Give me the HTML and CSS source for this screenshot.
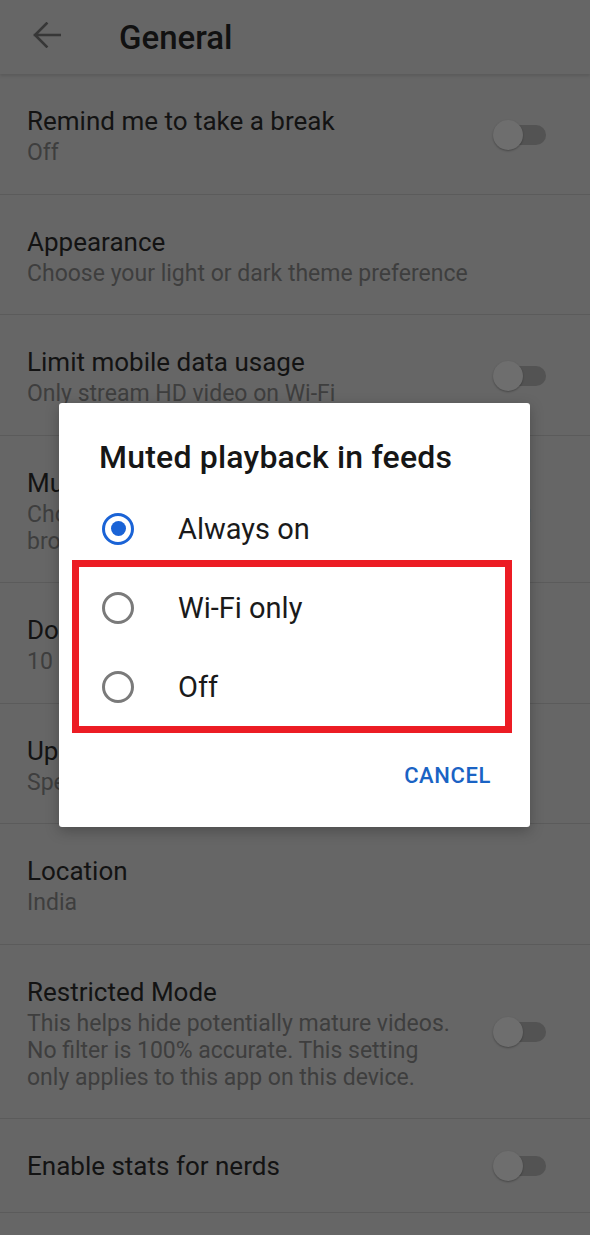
FILE: index.html
```html
<!DOCTYPE html>
<html lang="en">
<head>
<meta charset="utf-8">
<title>General</title>
<link rel="stylesheet" href="styles.css">
</head>
<body>
<div class="screen">
  <header class="header">
    <svg class="back" viewBox="0 0 28 26" width="28" height="26"><path d="M2 13H27.5M13.5 1.5L2 13L13.5 24.5" fill="none" stroke="#373737" stroke-width="2.6" stroke-linecap="square"/></svg>
    <h1 class="title">General</h1>
  </header>

  <div class="row">
    <div class="text">
      <div class="r-title">Remind me to take a break</div>
      <div class="r-sub">Off</div>
    </div>
    <div class="toggle"><span class="track"></span><span class="thumb"></span></div>
  </div>

  <div class="row">
    <div class="text">
      <div class="r-title">Appearance</div>
      <div class="r-sub">Choose your light or dark theme preference</div>
    </div>
  </div>

  <div class="row">
    <div class="text">
      <div class="r-title">Limit mobile data usage</div>
      <div class="r-sub">Only stream HD video on Wi-Fi</div>
    </div>
    <div class="toggle"><span class="track"></span><span class="thumb"></span></div>
  </div>

  <div class="row">
    <div class="text wide">
      <div class="r-title">Muted playback in feeds</div>
      <div class="r-sub">Choose whether videos play muted in feed as you<br>browse</div>
    </div>
  </div>

  <div class="row">
    <div class="text">
      <div class="r-title">Double-tap to seek</div>
      <div class="r-sub">10 seconds</div>
    </div>
  </div>

  <div class="row">
    <div class="text">
      <div class="r-title">Uploads</div>
      <div class="r-sub">Specify network preferences for uploads</div>
    </div>
  </div>

  <div class="row">
    <div class="text">
      <div class="r-title">Location</div>
      <div class="r-sub">India</div>
    </div>
  </div>

  <div class="row">
    <div class="text">
      <div class="r-title">Restricted Mode</div>
      <div class="r-sub">This helps hide potentially mature videos.<br>No filter is 100% accurate. This setting<br>only applies to this app on this device.</div>
    </div>
    <div class="toggle"><span class="track"></span><span class="thumb"></span></div>
  </div>

  <div class="row">
    <div class="text">
      <div class="r-title">Enable stats for nerds</div>
    </div>
    <div class="toggle"><span class="track"></span><span class="thumb"></span></div>
  </div>

  <div class="dialog">
    <div class="d-title">Muted playback in feeds</div>
    <div class="options">
      <div class="option">
        <span class="radio on"></span>
        <span class="o-label">Always on</span>
      </div>
      <div class="option">
        <span class="radio"></span>
        <span class="o-label">Wi-Fi only</span>
      </div>
      <div class="option">
        <span class="radio"></span>
        <span class="o-label">Off</span>
      </div>
    </div>
    <div class="actions">
      <span class="cancel">CANCEL</span>
    </div>
  </div>

  <div class="highlight"></div>
</div>
</body>
</html>
```

FILE: styles.css
```css
* { box-sizing: border-box; }

html, body {
  margin: 0;
  padding: 0;
  background: #666666;
}

body {
  font-family: Roboto, "Noto Sans", "Liberation Sans", sans-serif;
  color: #131313;
}

.screen {
  position: relative;
  width: 590px;
  height: 1235px;
  overflow: hidden;
  background: #666666;
}

.header {
  height: 74px;
  display: flex;
  align-items: center;
  padding-left: 33px;
  box-shadow: 0 2px 3px rgba(0, 0, 0, 0.12);
  position: relative;
}

.back {
  display: block;
  flex: none;
  margin-bottom: 5px;
}

.title {
  margin: 0 0 0 58px;
  font-size: 33px;
  font-weight: 500;
  color: #111111;
  letter-spacing: 0;
}

.row {
  display: flex;
  align-items: center;
  justify-content: space-between;
  padding: 29px 27px 27.5px 27px;
  border-bottom: 1px solid #5b5b5b;
}

.text {
  min-width: 0;
}

.text.wide {
  white-space: nowrap;
}

.r-title {
  font-size: 26px;
  line-height: 36px;
  color: #131313;
}

.r-sub {
  font-size: 23px;
  line-height: 27px;
  color: #3e3e3e;
}

.toggle {
  position: relative;
  width: 53px;
  height: 32px;
  margin-right: 17px;
  flex: none;
}

.track {
  position: absolute;
  right: 0;
  top: 6px;
  width: 40px;
  height: 20px;
  border-radius: 10px;
  background: #535353;
}

.thumb {
  position: absolute;
  left: 0;
  top: 1px;
  width: 30px;
  height: 30px;
  border-radius: 50%;
  background: #6e6e6e;
  box-shadow: 0 1px 2px rgba(0, 0, 0, 0.3);
}

.dialog {
  position: absolute;
  left: 59px;
  top: 403px;
  width: 471px;
  height: 424px;
  background: #ffffff;
  border-radius: 3px;
  box-shadow: 0 4px 14px rgba(0, 0, 0, 0.25);
  padding-top: 34px;
  display: flex;
  flex-direction: column;
}

.d-title {
  padding-left: 40px;
  font-size: 32px;
  line-height: 40px;
  font-weight: 500;
  color: #161616;
  letter-spacing: 0.2px;
}

.options {
  margin-top: 12px;
}

.option {
  height: 79px;
  display: flex;
  align-items: center;
  padding-left: 43px;
}

.radio {
  width: 32px;
  height: 32px;
  border-radius: 50%;
  border: 3px solid #7a7a7a;
  flex: none;
  display: flex;
  align-items: center;
  justify-content: center;
}

.radio.on {
  border-color: #1a63d6;
  border-width: 3.5px;
}

.radio.on::after {
  content: "";
  width: 15px;
  height: 15px;
  border-radius: 50%;
  background: #1a63d6;
}

.o-label {
  margin-left: 44px;
  font-size: 29px;
  color: #1a1a1a;
}

.actions {
  display: flex;
  justify-content: flex-end;
  padding-right: 39px;
  margin-top: 37px;
}

.cancel {
  font-size: 22px;
  line-height: 26px;
  font-weight: 500;
  color: #1a63c4;
  letter-spacing: 0.6px;
}

.highlight {
  position: absolute;
  left: 72px;
  top: 560px;
  width: 440px;
  height: 173px;
  border: 7px solid #ec1c24;
}
```
